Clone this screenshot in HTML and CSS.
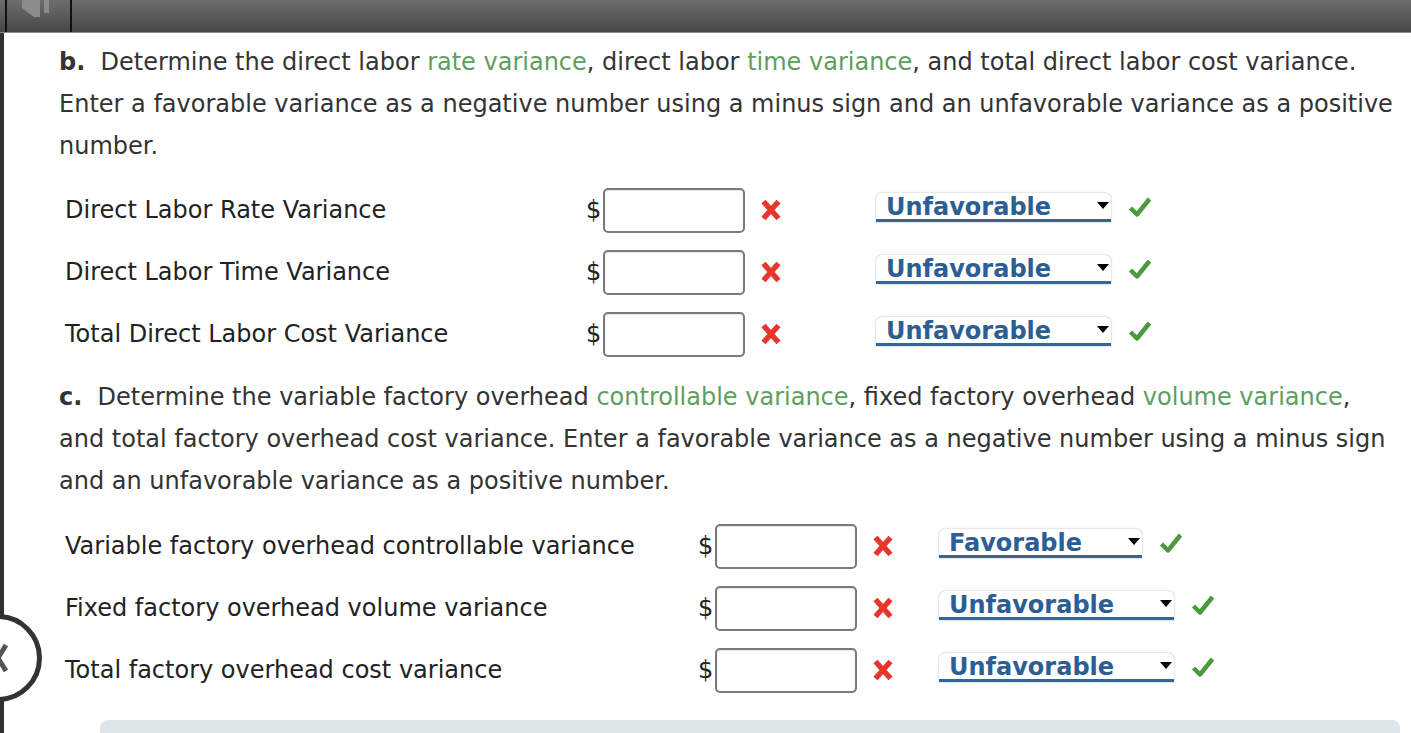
FILE: index.html
```html
<!DOCTYPE html>
<html>
<head>
<meta charset="utf-8">
<link rel="stylesheet" href="styles.css">
</head>
<body>
<div class="topbar">
  <div class="tab">
    <svg class="tab-icon" width="30" height="18" viewBox="0 0 30 18"><polygon points="0,0 18,0 18,17 12,17 0,8" fill="#8c8c8c"/><rect x="22" y="0" width="5" height="13" fill="#8c8c8c"/></svg>
  </div>
</div>
<div class="page">
  <div class="content">
    <p class="para"><b>b.</b>&nbsp; Determine the direct labor <span class="term">rate variance</span>, direct labor <span class="term">time variance</span>, and total direct labor cost variance. Enter a favorable variance as a negative number using a minus sign and an unfavorable variance as a positive number.</p>
    <div class="table table-b">
      <div class="row">
        <div class="label">Direct Labor Rate Variance</div>
        <div class="dollar">$</div><div class="input"></div>
        <div class="mark-x"><svg width="20" height="22" viewBox="0 0 20 22"><path d="M2.5 2.5 L17.5 19.5 M17.5 2.5 L2.5 19.5" stroke="#e8362b" stroke-width="5.5"/></svg></div>
        <div class="select wide"><span>Unfavorable</span><svg class="arrow" width="12" height="7" viewBox="0 0 12 7"><polygon points="0,0 12,0 6,7" fill="#000"/></svg></div>
        <div class="check"><svg width="24" height="22" viewBox="0 0 24 22"><path d="M2.5 12 L9 18.5 L21.5 3" fill="none" stroke="#4b9a3e" stroke-width="4.5" stroke-linejoin="round"/></svg></div>
      </div>
      <div class="row">
        <div class="label">Direct Labor Time Variance</div>
        <div class="dollar">$</div><div class="input"></div>
        <div class="mark-x"><svg width="20" height="22" viewBox="0 0 20 22"><path d="M2.5 2.5 L17.5 19.5 M17.5 2.5 L2.5 19.5" stroke="#e8362b" stroke-width="5.5"/></svg></div>
        <div class="select wide"><span>Unfavorable</span><svg class="arrow" width="12" height="7" viewBox="0 0 12 7"><polygon points="0,0 12,0 6,7" fill="#000"/></svg></div>
        <div class="check"><svg width="24" height="22" viewBox="0 0 24 22"><path d="M2.5 12 L9 18.5 L21.5 3" fill="none" stroke="#4b9a3e" stroke-width="4.5" stroke-linejoin="round"/></svg></div>
      </div>
      <div class="row">
        <div class="label">Total Direct Labor Cost Variance</div>
        <div class="dollar">$</div><div class="input"></div>
        <div class="mark-x"><svg width="20" height="22" viewBox="0 0 20 22"><path d="M2.5 2.5 L17.5 19.5 M17.5 2.5 L2.5 19.5" stroke="#e8362b" stroke-width="5.5"/></svg></div>
        <div class="select wide"><span>Unfavorable</span><svg class="arrow" width="12" height="7" viewBox="0 0 12 7"><polygon points="0,0 12,0 6,7" fill="#000"/></svg></div>
        <div class="check"><svg width="24" height="22" viewBox="0 0 24 22"><path d="M2.5 12 L9 18.5 L21.5 3" fill="none" stroke="#4b9a3e" stroke-width="4.5" stroke-linejoin="round"/></svg></div>
      </div>
    </div>
    <p class="para para-c"><b>c.</b>&nbsp; Determine the variable factory overhead <span class="term">controllable variance</span>, fixed factory overhead <span class="term">volume variance</span>, and total factory overhead cost variance. Enter a favorable variance as a negative number using a minus sign and an unfavorable variance as a positive number.</p>
    <div class="table table-c">
      <div class="row">
        <div class="label">Variable factory overhead controllable variance</div>
        <div class="dollar">$</div><div class="input"></div>
        <div class="mark-x"><svg width="20" height="22" viewBox="0 0 20 22"><path d="M2.5 2.5 L17.5 19.5 M17.5 2.5 L2.5 19.5" stroke="#e8362b" stroke-width="5.5"/></svg></div>
        <div class="select narrow"><span>Favorable</span><svg class="arrow" width="12" height="7" viewBox="0 0 12 7"><polygon points="0,0 12,0 6,7" fill="#000"/></svg></div>
        <div class="check"><svg width="24" height="22" viewBox="0 0 24 22"><path d="M2.5 12 L9 18.5 L21.5 3" fill="none" stroke="#4b9a3e" stroke-width="4.5" stroke-linejoin="round"/></svg></div>
      </div>
      <div class="row">
        <div class="label">Fixed factory overhead volume variance</div>
        <div class="dollar">$</div><div class="input"></div>
        <div class="mark-x"><svg width="20" height="22" viewBox="0 0 20 22"><path d="M2.5 2.5 L17.5 19.5 M17.5 2.5 L2.5 19.5" stroke="#e8362b" stroke-width="5.5"/></svg></div>
        <div class="select wide"><span>Unfavorable</span><svg class="arrow" width="12" height="7" viewBox="0 0 12 7"><polygon points="0,0 12,0 6,7" fill="#000"/></svg></div>
        <div class="check"><svg width="24" height="22" viewBox="0 0 24 22"><path d="M2.5 12 L9 18.5 L21.5 3" fill="none" stroke="#4b9a3e" stroke-width="4.5" stroke-linejoin="round"/></svg></div>
      </div>
      <div class="row">
        <div class="label">Total factory overhead cost variance</div>
        <div class="dollar">$</div><div class="input"></div>
        <div class="mark-x"><svg width="20" height="22" viewBox="0 0 20 22"><path d="M2.5 2.5 L17.5 19.5 M17.5 2.5 L2.5 19.5" stroke="#e8362b" stroke-width="5.5"/></svg></div>
        <div class="select wide"><span>Unfavorable</span><svg class="arrow" width="12" height="7" viewBox="0 0 12 7"><polygon points="0,0 12,0 6,7" fill="#000"/></svg></div>
        <div class="check"><svg width="24" height="22" viewBox="0 0 24 22"><path d="M2.5 12 L9 18.5 L21.5 3" fill="none" stroke="#4b9a3e" stroke-width="4.5" stroke-linejoin="round"/></svg></div>
      </div>
    </div>
    <div class="footer-box"></div>
  </div>
  <div class="nav-circle">
    <svg width="12" height="30" viewBox="0 0 12 30"><path d="M10 2 L2 15 L10 28" fill="none" stroke="#555" stroke-width="5"/></svg>
  </div>
</div>
</body>
</html>
```
FILE: styles.css
```css
html, body {
  margin: 0;
  padding: 0;
  background: #fff;
  overflow: hidden;
}
body {
  font-family: "DejaVu Sans", Verdana, sans-serif;
  color: #333;
  width: 1411px;
  height: 733px;
}
.topbar {
  height: 32px;
  background: linear-gradient(#6e6e6e, #474747);
  border-bottom: 1px solid #8a8a8a;
  display: flex;
}
.tab {
  margin-left: 5px;
  width: 63px;
  height: 32px;
  border-left: 2px solid #111;
  border-right: 2px solid #111;
  position: relative;
}
.tab-icon {
  position: absolute;
  left: 15px;
  top: 0;
}
.page {
  position: relative;
  height: 700px;
  border-left: 4px solid #2f2f2f;
}
.content {
  padding: 8px 0 0 55px;
}
.para {
  margin: 0;
  font-size: 24px;
  line-height: 42px;
  width: 1338px;
  color: #333;
}
.term {
  color: #5e9e5e;
}
.table {
  margin-top: 12px;
}
.para-c {
  margin-top: 11px;
}
.table-c {
  margin-top: 13px;
}
.row {
  height: 62px;
  display: flex;
  align-items: center;
}
.row > * {
  flex-shrink: 0;
}
.label {
  padding-left: 6px;
  font-size: 24px;
  color: #222;
}
.table-b .label {
  width: 521px;
}
.table-c .label {
  width: 633px;
}
.dollar {
  width: 17px;
  font-size: 24px;
  color: #222;
}
.input {
  width: 138px;
  height: 41px;
  border: 2px solid #7a7a7a;
  border-radius: 5px;
  box-shadow: inset 0 1px 2px rgba(0,0,0,0.1);
  background: #fff;
}
.mark-x {
  margin-left: 16px;
  width: 20px;
  height: 22px;
  display: flex;
}
.table-b .select {
  margin-left: 95px;
}
.table-c .select {
  margin-left: 46px;
}
.select {
  height: 26px;
  margin-top: -6px;
  background: #fff;
  border-radius: 6px 6px 0 0;
  box-shadow: 0 0 2px rgba(0,0,0,0.35);
  border-bottom: 3px solid #336699;
  display: flex;
  align-items: center;
  justify-content: space-between;
  padding: 0 2px 0 10px;
  box-sizing: content-box;
  font-weight: bold;
  font-size: 24px;
  color: #2d5e93;
}
.select span {
  line-height: 26px;
  margin-top: 2px;
}
.select.wide {
  width: 223px;
}
.select.narrow {
  width: 191px;
}
.arrow {
  margin-top: -1px;
}
.check {
  margin-left: 17px;
  margin-top: -6px;
  display: flex;
}
.footer-box {
  margin: 19px 0 0 41px;
  width: 1300px;
  height: 30px;
  background: #dfe6ea;
  border-radius: 8px 8px 0 0;
}
.nav-circle {
  position: absolute;
  left: -50px;
  top: 581px;
  width: 78px;
  height: 78px;
  border: 5px solid #333;
  border-radius: 50%;
  background: #fff;
  display: flex;
  align-items: center;
  justify-content: flex-end;
}
.nav-circle svg {
  margin-right: 29px;
}
```
